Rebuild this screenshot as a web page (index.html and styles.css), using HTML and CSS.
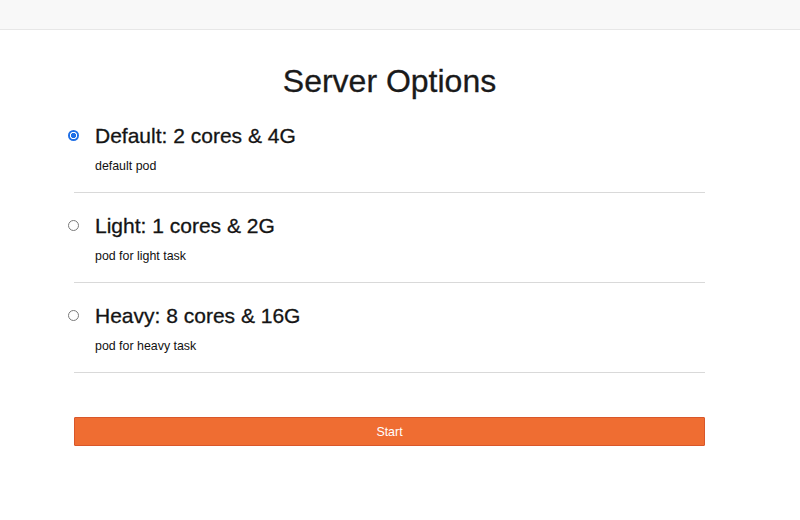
FILE: index.html
```html
<!DOCTYPE html>
<html lang="en">
<head>
<meta charset="utf-8">
<title>Server Options</title>
<link rel="stylesheet" href="styles.css">
</head>
<body>
<div class="topbar"></div>
<main class="container">
  <h1 class="title">Server Options</h1>
  <form class="options">
    <label class="option">
      <input type="radio" name="profile" value="0" checked>
      <span class="option-body">
        <span class="option-title">Default: 2 cores &amp; 4G</span>
        <span class="option-desc">default pod</span>
      </span>
    </label>
    <hr class="sep">
    <label class="option">
      <input type="radio" name="profile" value="1">
      <span class="option-body">
        <span class="option-title">Light: 1 cores &amp; 2G</span>
        <span class="option-desc">pod for light task</span>
      </span>
    </label>
    <hr class="sep">
    <label class="option">
      <input type="radio" name="profile" value="2">
      <span class="option-body">
        <span class="option-title">Heavy: 8 cores &amp; 16G</span>
        <span class="option-desc">pod for heavy task</span>
      </span>
    </label>
    <hr class="sep">
    <button type="button" class="start">Start</button>
  </form>
</main>
</body>
</html>
```

FILE: styles.css
```css
html, body {
  margin: 0;
  padding: 0;
  background: #fff;
}
body {
  font-family: "Liberation Sans", Arial, Helvetica, sans-serif;
  color: #1a1a1a;
}
.topbar {
  height: 29px;
  background: #f8f8f8;
  border-bottom: 1px solid #e7e7e7;
}
.container {
  margin-left: 74px;
  width: 631px;
}
.title {
  margin: 34px 0 0;
  font-size: 32px;
  line-height: 35px;
  font-weight: normal;
  text-align: center;
  color: #1a1a1a;
  -webkit-text-stroke: 0.3px #1a1a1a;
}
.options {
  margin: 25px 0 0;
  display: flex;
  flex-direction: column;
}
.option {
  display: flex;
  align-items: flex-start;
  gap: 16px;
  margin-left: -6px;
  cursor: pointer;
}
.option input {
  appearance: none;
  -webkit-appearance: none;
  margin: 6px 0 0;
  width: 11px;
  height: 11px;
  flex: 0 0 11px;
  border-radius: 50%;
  border: 1px solid #7a7a7a;
  background: #fff;
  box-sizing: border-box;
}
.option input:checked {
  border: none;
  background: radial-gradient(circle, #1f6fe6 0 2.4px, #ffffff 2.9px 3.4px, #1f6fe6 3.9px);
}
.option-body {
  display: flex;
  flex-direction: column;
  gap: 10px;
}
.option-title {
  font-size: 21px;
  line-height: 24px;
  color: #141414;
  -webkit-text-stroke: 0.3px #141414;
}
.option-desc {
  font-size: 12.4px;
  line-height: 17px;
  color: #111;
}
.sep {
  margin: 17px 0 21px;
  border: 0;
  border-top: 1px solid #d9d9d9;
  height: 0;
}
.sep:last-of-type {
  margin-bottom: 44px;
}
.start {
  height: 29px;
  width: 100%;
  background: #ef6d32;
  border: 1px solid #d9572a;
  border-radius: 1px;
  color: #fff;
  font-family: "Liberation Sans", Arial, sans-serif;
  font-size: 12.4px;
  padding: 0;
  cursor: pointer;
}
```
